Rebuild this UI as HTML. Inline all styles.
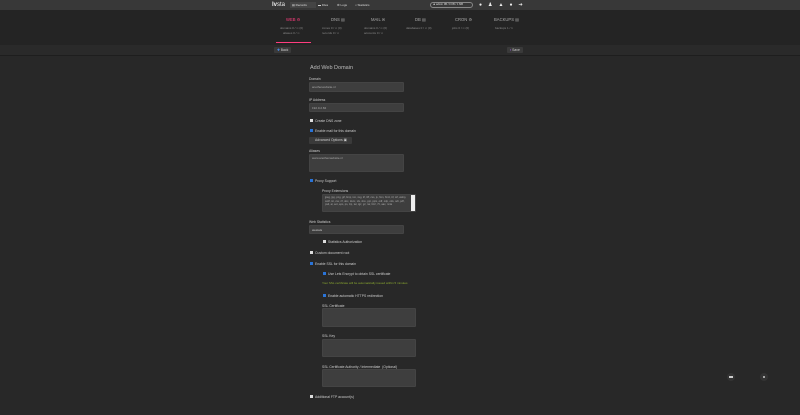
<!DOCTYPE html><html><head><meta charset="utf-8"><style>
*{margin:0;padding:0;box-sizing:border-box}
body{width:800px;height:415px;background:#282828;font-family:"Liberation Sans",sans-serif;color:#ddd;position:relative;overflow:hidden;font-size:4px}
.a{position:absolute;white-space:nowrap}
.top{left:0;top:0;width:800px;height:10px;background:#383838}
.tabs{left:0;top:10px;width:800px;height:35px;background:#242424}
.bar{left:0;top:45px;width:800px;height:11px;background:#2a2a2a;border-bottom:1px solid #1e1e1e}
.in{background:#3e3e3e;border:1px solid #444;border-radius:1px}
.lb{font-size:3.4px;color:#ccc}
.cb{width:3px;height:3px;background:#ddd}
.cb.on{background:#2a74d8}
.t{font-size:4.2px;color:#aaa}
.s{font-size:3px;color:#888}
.btn{background:#3a3a3a;border-radius:1px;font-size:3.4px;color:#ccc;padding:1px 3px}
</style></head><body>
<div class="a top"></div>
<div class="a" style="left:272px;top:2px;font-size:6px;color:#eee;font-weight:bold">lv<span style="font-weight:normal">sta</span></div>
<div class="a" style="left:290px;top:2px;width:26px;height:6px;background:#444"></div>
<div class="a s" style="left:292px;top:3px;color:#ddd">▤ Records</div>
<div class="a s" style="left:318px;top:3px;color:#ddd">▬ Files</div>
<div class="a s" style="left:337px;top:3px;color:#ddd">⚙ Logs</div>
<div class="a s" style="left:355px;top:3px;color:#ddd">⌗ Statistics</div>
<div class="a" style="left:430px;top:2px;width:43px;height:6px;border:1px solid #888;border-radius:3px"></div>
<div class="a s" style="left:433px;top:3px;color:#ddd;font-size:2.6px">♟ admin 0B / 0 KB / 1 MB</div>
<div class="a s" style="left:479px;top:2px;color:#eee;font-size:5px;letter-spacing:6px">●♟▲●➔</div>
<div class="a tabs"></div>
<div class="a t" style="left:286px;top:17px;color:#ff3d7f">WEB ⚙</div>
<div class="a s" style="left:280px;top:26px">domains 0 / ∞ (0)</div>
<div class="a s" style="left:283px;top:31px">aliases 0 / ∞</div>
<div class="a t" style="left:331px;top:17px">DNS ▤</div>
<div class="a s" style="left:322px;top:26px">zones 0 / ∞ (0)</div>
<div class="a s" style="left:322px;top:31px">records 0 / ∞</div>
<div class="a t" style="left:371px;top:17px">MAIL ✉</div>
<div class="a s" style="left:364px;top:26px">domains 0 / ∞ (0)</div>
<div class="a s" style="left:364px;top:31px">accounts 0 / ∞</div>
<div class="a t" style="left:415px;top:17px">DB ▤</div>
<div class="a s" style="left:406px;top:26px">databases 0 / ∞ (0)</div>
<div class="a t" style="left:455px;top:17px">CRON ⚙</div>
<div class="a s" style="left:452px;top:26px">jobs 0 / ∞ (0)</div>
<div class="a t" style="left:494px;top:17px">BACKUPS ▤</div>
<div class="a s" style="left:495px;top:26px">backups 1 / 1</div>
<div class="a" style="left:276px;top:42px;width:35px;height:1px;background:#ff3d7f"></div>
<div class="a bar"></div>
<div class="a btn" style="left:274px;top:47px"><span style="color:#4a8ef0">✚</span> Back</div>
<div class="a btn" style="left:507px;top:47px"><span style="color:#b060ff">▪</span> Save</div>

<div class="a" style="left:310px;top:65px;font-size:5.5px;color:#bbb">Add Web Domain</div>
<div class="a lb" style="left:309px;top:77px">Domain</div>
<div class="a in" style="left:309px;top:82px;width:95px;height:10px"></div>
<div class="a s" style="left:312px;top:85px;color:#aaa">anotherwebsite.nl</div>
<div class="a lb" style="left:309px;top:98px">IP Address</div>
<div class="a in" style="left:309px;top:103px;width:95px;height:9px"></div>
<div class="a s" style="left:312px;top:106px;color:#aaa">192.0.2.84</div>
<div class="a cb" style="left:310px;top:119px"></div><div class="a lb" style="left:315px;top:119px">Create DNS zone</div>
<div class="a cb on" style="left:310px;top:129px"></div><div class="a lb" style="left:315px;top:129px">Enable mail for this domain</div>
<div class="a btn" style="left:309px;top:137px;width:43px;height:7px;padding-left:6px">Advanced Options ▣</div>
<div class="a lb" style="left:309px;top:149px">Aliases</div>
<div class="a in" style="left:309px;top:154px;width:95px;height:18px"></div>
<div class="a s" style="left:312px;top:156px;color:#aaa">www.anotherwebsite.nl</div>
<div class="a cb on" style="left:310px;top:179px"></div><div class="a lb" style="left:315px;top:179px">Proxy Support</div>
<div class="a lb" style="left:322px;top:189px">Proxy Extensions</div>
<div class="a in" style="left:322px;top:194px;width:94px;height:18px"></div>
<div class="a" style="left:411px;top:195px;width:4px;height:16px;background:#eee"></div>
<div class="a" style="left:325px;top:196px;font-size:2.6px;color:#aaa;line-height:3.6px;white-space:normal;width:84px">jpeg, jpg, png, gif, bmp, ico, svg, tif, tiff, css, js, htm, html, ttf, otf, webp, woff, txt, csv, rtf, doc, docx, xls, xlsx, ppt, pptx, odf, odp, ods, odt, pdf, psd, ai, eot, eps, ps, zip, tar, tgz, gz, rar, bz2, 7z, aac, m4a</div>
<div class="a lb" style="left:309px;top:220px">Web Statistics</div>
<div class="a in" style="left:309px;top:225px;width:95px;height:9px"></div>
<div class="a s" style="left:312px;top:228px;color:#ccc">awstats</div>
<div class="a cb" style="left:323px;top:240px"></div><div class="a lb" style="left:328px;top:240px">Statistics Authorization</div>
<div class="a cb" style="left:310px;top:251px"></div><div class="a lb" style="left:315px;top:251px">Custom document root</div>
<div class="a cb on" style="left:310px;top:262px"></div><div class="a lb" style="left:315px;top:262px">Enable SSL for this domain</div>
<div class="a cb on" style="left:323px;top:272px"></div><div class="a lb" style="left:328px;top:272px">Use Lets Encrypt to obtain SSL certificate</div>
<div class="a s" style="left:322px;top:281px;color:#8aa830">Your SSL certificate will be automatically issued within 5 minutes</div>
<div class="a cb on" style="left:323px;top:294px"></div><div class="a lb" style="left:328px;top:294px">Enable automatic HTTPS redirection</div>
<div class="a lb" style="left:322px;top:304px">SSL Certificate</div>
<div class="a in" style="left:322px;top:308px;width:94px;height:19px"></div>
<div class="a lb" style="left:322px;top:334px">SSL Key</div>
<div class="a in" style="left:322px;top:339px;width:94px;height:18px"></div>
<div class="a lb" style="left:322px;top:365px">SSL Certificate Authority / Intermediate &nbsp;(Optional)</div>
<div class="a in" style="left:322px;top:369px;width:94px;height:18px"></div>
<div class="a cb" style="left:310px;top:395px"></div><div class="a lb" style="left:315px;top:395px">Additional FTP account(s)</div>
<div class="a" style="left:727px;top:373px;width:8px;height:8px;border-radius:50%;background:#333"></div>
<div class="a" style="left:729px;top:376px;width:4px;height:2px;background:#ccc"></div>
<div class="a" style="left:760px;top:373px;width:8px;height:8px;border-radius:50%;background:#333"></div>
<div class="a" style="left:763px;top:376px;width:2px;height:2px;background:#ccc;border-radius:50%"></div>
</body></html>
